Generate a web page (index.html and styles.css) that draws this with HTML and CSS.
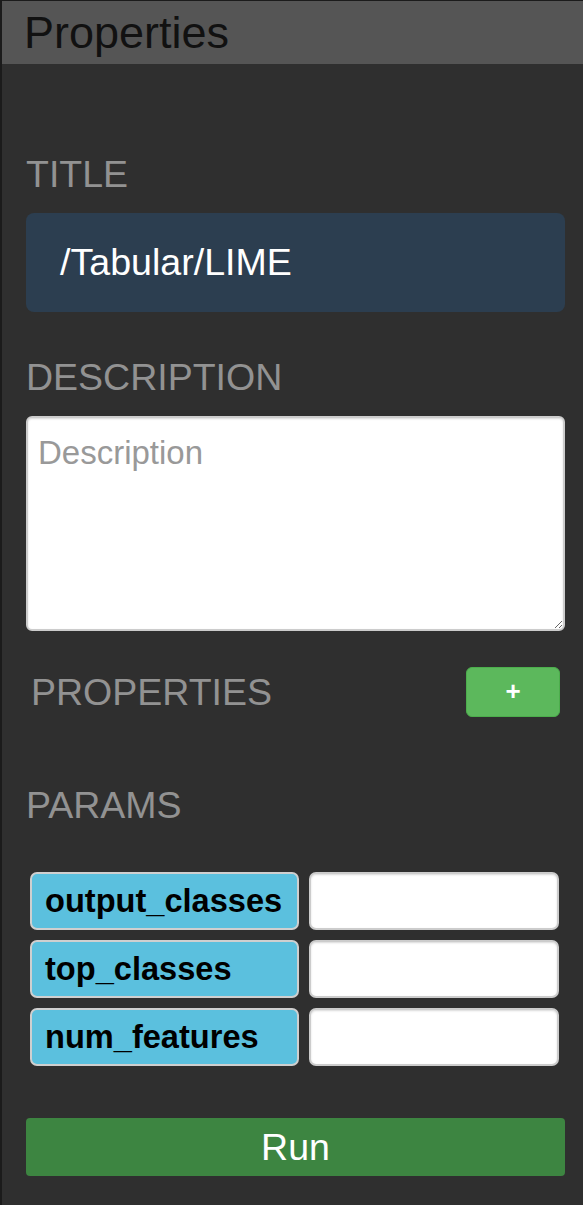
FILE: index.html
```html
<!DOCTYPE html>
<html>
<head>
<meta charset="utf-8">
<link rel="stylesheet" href="styles.css">
</head>
<body>
<div class="panel">
  <div class="panel-header">Properties</div>
  <div class="panel-body">
    <div class="section-label label-title">TITLE</div>
    <div class="title-box">/Tabular/LIME</div>
    <div class="section-label label-desc">DESCRIPTION</div>
    <textarea class="desc" placeholder="Description"></textarea>
    <div class="props-row">
      <span class="section-label">PROPERTIES</span>
      <button class="add-btn">+</button>
    </div>
    <div class="section-label label-params">PARAMS</div>
    <div class="params">
      <div class="param-row"><span class="param-name">output_classes</span><input class="param-input" type="text"></div>
      <div class="param-row"><span class="param-name">top_classes</span><input class="param-input" type="text"></div>
      <div class="param-row"><span class="param-name">num_features</span><input class="param-input" type="text"></div>
    </div>
    <button class="run-btn">Run</button>
  </div>
</div>
</body>
</html>
```
FILE: styles.css
```css
html, body {
  margin: 0;
  padding: 0;
  background: #2f2f2f;
}
body {
  font-family: "Liberation Sans", Arial, sans-serif;
}
.panel {
  border-left: 2px solid #1b1b1b;
  border-top: 1px solid #1b1b1b;
  min-height: 1204px;
  background: #2f2f2f;
}
.panel-header {
  height: 63px;
  line-height: 63px;
  background: #555555;
  color: #111111;
  font-size: 45px;
  padding-left: 22px;
}
.panel-body {
  padding: 0 18px 0 24px;
  display: flex;
  flex-direction: column;
}
.section-label {
  font-size: 37.5px;
  line-height: 42px;
  color: #929292;
}
.label-title {
  margin-top: 89px;
}
.title-box {
  margin-top: 18px;
  height: 99px;
  line-height: 99px;
  background: #2c3e50;
  border-radius: 8px;
  color: #ffffff;
  font-size: 37.6px;
  padding-left: 34px;
}
.label-desc {
  margin-top: 44px;
}
.desc {
  display: block;
  margin: 18px 0 0 0;
  box-sizing: border-box;
  width: 100%;
  height: 215px;
  border: 2px solid #cccccc;
  border-radius: 6px;
  box-shadow: inset 0 1px 2px rgba(0,0,0,0.15);
  background: #ffffff;
  font-family: "Liberation Sans", Arial, sans-serif;
  font-size: 33px;
  line-height: 1.42857;
  padding: 11px 10px;
  color: #333;
}
.desc::placeholder {
  color: #999999;
}
.props-row {
  margin-top: 36px;
  height: 50px;
  display: flex;
  align-items: center;
  justify-content: space-between;
  padding: 0 5px 0 5px;
}
.add-btn {
  width: 94px;
  height: 50px;
  box-sizing: border-box;
  background: #5cb85c;
  border: 1px solid #4cae4c;
  border-radius: 6px;
  color: #ffffff;
  font-family: "Liberation Sans", Arial, sans-serif;
  font-weight: bold;
  font-size: 26px;
  line-height: 1;
  padding: 0 0 3px 0;
}
.label-params {
  margin-top: 67px;
}
.params {
  margin-top: 46px;
  display: flex;
  flex-direction: column;
  gap: 10px;
  padding: 0 6px 0 4px;
}
.param-row {
  display: flex;
  gap: 10px;
  height: 58px;
}
.param-name {
  box-sizing: border-box;
  width: 269px;
  height: 58px;
  line-height: 54px;
  background: #5bc0de;
  border: 2px solid #cfcfcf;
  border-radius: 7px;
  color: #000000;
  font-weight: bold;
  font-size: 32.6px;
  padding-left: 13px;
}
.param-input {
  box-sizing: border-box;
  flex: 1;
  min-width: 0;
  height: 58px;
  margin: 0;
  border: 2px solid #cccccc;
  border-radius: 7px;
  background: #ffffff;
  box-shadow: inset 0 1px 2px rgba(0,0,0,0.15);
  font-size: 28px;
  padding: 0 12px;
}
.run-btn {
  margin-top: 52px;
  height: 58px;
  width: 100%;
  border: none;
  border-radius: 4px;
  background: #3d8541;
  color: #ffffff;
  font-family: "Liberation Sans", Arial, sans-serif;
  font-size: 37.5px;
  line-height: 58px;
  padding: 0;
}
```
